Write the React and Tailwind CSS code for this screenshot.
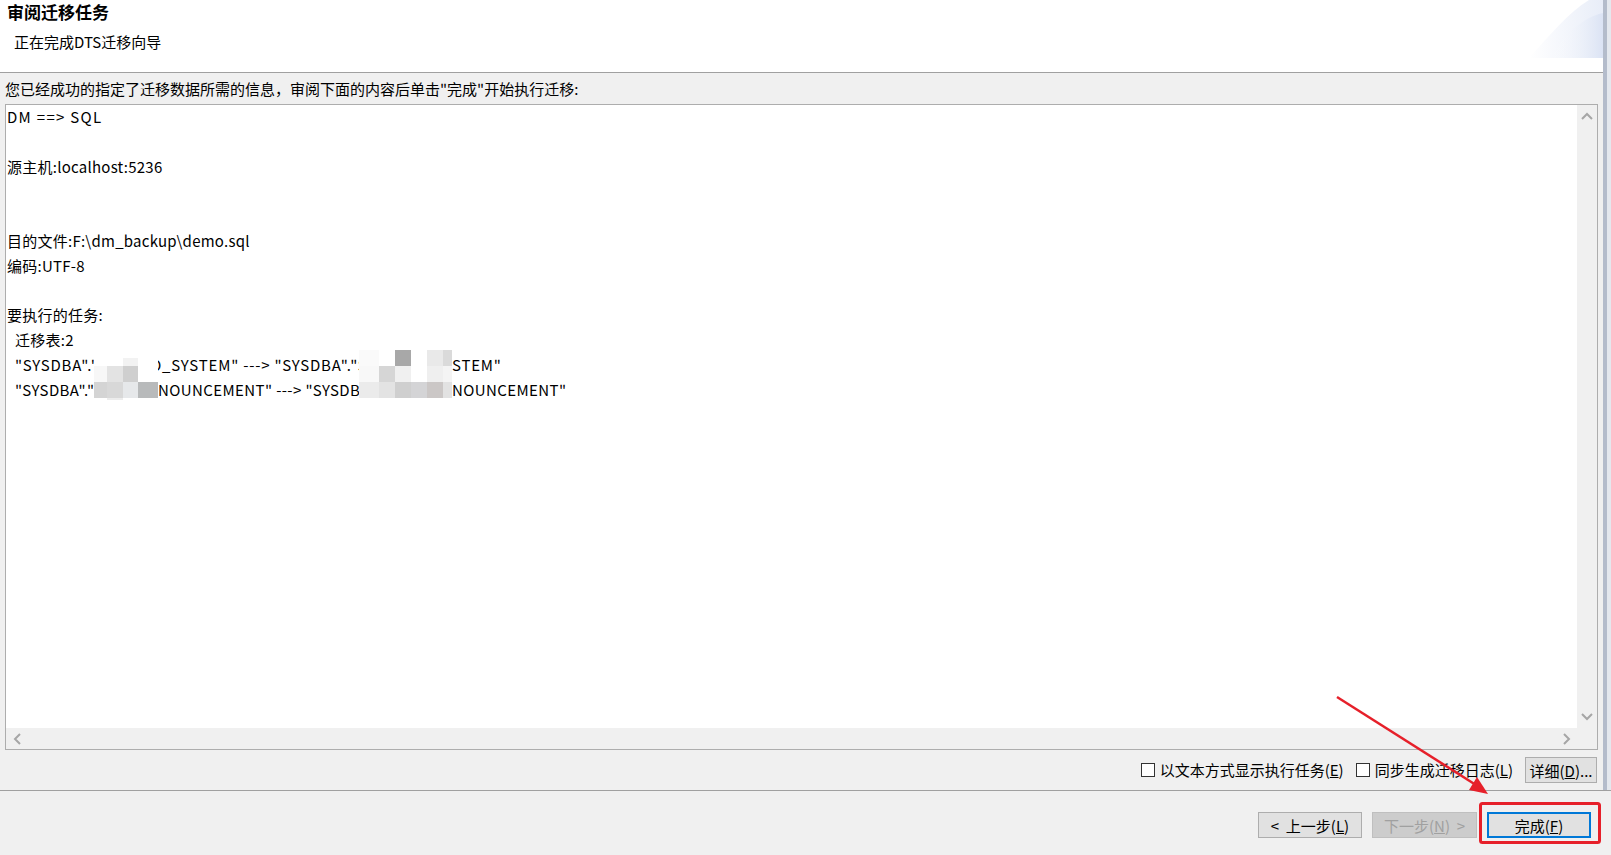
import React from 'react';

const font = "font-['Noto_Sans_CJK_SC','Microsoft_YaHei',sans-serif]";

const Chevron = ({ dir }) => {
    const d = {
        up: 'M1 7 L6 2 L11 7',
        down: 'M1 2 L6 7 L11 2',
        left: 'M7 1 L2 6 L7 11',
        right: 'M2 1 L7 6 L2 11',
    }[dir];
    const vertical = dir === 'up' || dir === 'down';
    return (
        <svg width={vertical ? 12 : 9} height={vertical ? 9 : 12} viewBox={vertical ? '0 0 12 9' : '0 0 9 12'}>
            <path d={d} fill="none" stroke="#a6a6a6" strokeWidth="2" />
        </svg>
    );
};

const Line = ({ children, className = '' }) => (
    <div className={`h-[24.8px] leading-[24.8px] whitespace-nowrap ${className}`}>{children}</div>
);

// mosaic over the redacted table names
const mosaic = [
    [94, 356, 13, 10, '#ffffff'], [107, 356, 16, 10, '#ffffff'], [123, 358, 15, 8, '#f2f2f2'], [138, 356, 20, 10, '#ffffff'],
    [94, 366, 13, 16, '#f7f7f7'], [107, 366, 16, 16, '#e3e3e3'], [123, 366, 15, 16, '#cfcfcf'], [138, 366, 20, 16, '#ffffff'],
    [94, 382, 13, 16, '#d4d4d4'], [107, 382, 16, 16, '#d8d8d8'], [123, 382, 15, 16, '#e6e8ea'], [138, 382, 20, 16, '#b8babb'],
    [107, 398, 16, 2, '#ececec'],
    [359, 350, 20, 16, '#fafafa'], [379, 350, 16, 16, '#ffffff'], [395, 350, 16, 16, '#a8a8a8'], [411, 350, 16, 16, '#ffffff'], [427, 350, 16, 16, '#e9e9e9'], [443, 350, 9, 16, '#dadada'],
    [359, 366, 20, 16, '#f8f8f8'], [379, 366, 16, 16, '#d6d6d6'], [395, 366, 16, 16, '#f0f0f0'], [411, 366, 16, 16, '#ffffff'], [427, 366, 16, 16, '#efefef'], [443, 366, 9, 16, '#f4f4f4'],
    [359, 382, 20, 16, '#ebebeb'], [379, 382, 16, 16, '#e3e3e3'], [395, 382, 16, 16, '#cfcfcf'], [411, 382, 16, 16, '#d4d4d6'], [427, 382, 16, 16, '#cbc7c6'], [443, 382, 9, 16, '#e2e2e2'],
];

const Checkbox = ({ label, hot }) => (
    <label className="flex items-center gap-[5px]">
        <span className="w-[14px] h-[14px] border border-[#333333] bg-white" />
        <span>{label}(<u>{hot}</u>)</span>
    </label>
);

export default function App() {
    return (
        <div className={`relative w-[1611px] h-[855px] bg-[#f0f0f0] text-black text-[15px] overflow-hidden flex flex-col ${font}`}>
            <div className="flex h-[790px]">
                <div className="w-[1603px] flex flex-col">
                    {/* header */}
                    <div className="relative h-[73px] bg-white border-b border-[#a0a0a0] pl-[7px] pt-[1px]">
                        <div className="text-[17px] font-bold leading-[22px]">审阅迁移任务</div>
                        <div className="mt-[9px] pl-[7px] leading-[20px]">正在完成DTS迁移向导</div>
                        <svg className="absolute right-0 top-0" width="80" height="58" viewBox="0 0 80 58">
                            <defs>
                                <linearGradient id="g1" x1="0" y1="0" x2="1" y2="0">
                                    <stop offset="0" stopColor="#ffffff" />
                                    <stop offset="1" stopColor="#e8edf8" />
                                </linearGradient>
                                <linearGradient id="g2" x1="0" y1="0" x2="1" y2="0">
                                    <stop offset="0" stopColor="#ffffff" stopOpacity="0" />
                                    <stop offset="1" stopColor="#dbe3f4" />
                                </linearGradient>
                            </defs>
                            <path d="M6 58 C 26 36, 46 12, 66 0 L80 0 L80 58 Z" fill="url(#g1)" />
                            <path d="M28 58 C 40 36, 58 18, 80 13 L80 58 Z" fill="url(#g2)" />
                        </svg>
                    </div>

                    <div className="h-[31px] pl-[5px] pt-[6px] leading-[20px]">
                        您已经成功的指定了迁移数据所需的信息，审阅下面的内容后单击"完成"开始执行迁移:
                    </div>

                    {/* summary text box */}
                    <div className="mx-[5px] h-[646px] border border-[#adadad] flex flex-col">
                        <div className="flex h-[623px]">
                            <div className="flex-1 bg-white pl-[1px] tracking-[0.25px]">
                                <Line className="tracking-[1.3px]">{'DM ==> SQL'}</Line>
                                <Line />
                                <Line>源主机:localhost:5236</Line>
                                <Line />
                                <Line />
                                <Line>目的文件:F:\dm_backup\demo.sql</Line>
                                <Line>编码:UTF-8</Line>
                                <Line />
                                <Line>要执行的任务:</Line>
                                <Line className="pl-2">迁移表:2</Line>
                                <Line className="pl-2 tracking-[0.8px]">
                                    <span className="inline-block w-[78px]">"SYSDBA"."</span>
                                    <span className="inline-block w-[58px]" />
                                    <span className="inline-block w-[208px]">{'D_SYSTEM" ---> "SYSDBA"."S'}</span>
                                    <span className="inline-block w-[93px]" />
                                    STEM"
                                </Line>
                                <Line className="pl-2 tracking-[0.4px]">
                                    <span className="inline-block w-[78px]">"SYSDBA"."</span>
                                    <span className="inline-block w-[65px]" />
                                    <span className="inline-block w-[201px]">{'NOUNCEMENT" ---> "SYSDBA"."SYS'}</span>
                                    <span className="inline-block w-[93px]" />
                                    NOUNCEMENT"
                                </Line>
                            </div>
                            <div className="w-[20px] flex flex-col justify-between items-center py-[7px]">
                                <Chevron dir="up" />
                                <Chevron dir="down" />
                            </div>
                        </div>
                        <div className="flex h-[21px]">
                            <div className="flex-1 flex items-center justify-between pl-[7px] pr-[6px]">
                                <Chevron dir="left" />
                                <Chevron dir="right" />
                            </div>
                            <div className="w-[20px]" />
                        </div>
                    </div>

                    <div className="mt-[7px] h-[26px] flex items-center justify-end pr-[6px]">
                        <Checkbox label="以文本方式显示执行任务" hot="E" />
                        <div className="ml-[12px]">
                            <Checkbox label="同步生成迁移日志" hot="L" />
                        </div>
                        <button className="ml-[12px] w-[72px] h-[26px] bg-[#e1e1e1] border border-[#adadad] leading-none">
                            详细(<u>D</u>)...
                        </button>
                    </div>
                </div>
                <div className="w-[4px] bg-[#b4bccb]" />
                <div className="w-[4px] bg-[#e4e8ee]" />
            </div>

            {/* wizard buttons */}
            <div className="flex-1 border-t border-[#a0a0a0] flex justify-end items-start gap-[10px] pt-[21px] pr-[20px]">
                <button className="w-[104px] h-[26px] bg-[#e1e1e1] border border-[#adadad] leading-none">
                    {'<\u00a0\u00a0上一步('}<u>L</u>)
                </button>
                <button className="w-[105px] h-[26px] bg-[#cccccc] border border-[#bfbfbf] text-[#a0a0a0] leading-none">
                    下一步(<u>N</u>){'\u00a0\u00a0>'}
                </button>
                <button className="w-[104px] h-[26px] bg-[#e1e1e1] border-2 border-[#0078d7] leading-none">
                    完成(<u>F</u>)
                </button>
            </div>

            {/* overlays: mosaic and red annotation */}
            <svg className="absolute inset-0 pointer-events-none" width="1611" height="855" viewBox="0 0 1611 855">
                {mosaic.map(([x, y, w, h, c], i) => (
                    <rect key={i} x={x} y={y} width={w} height={h} fill={c} />
                ))}
                <rect x="1480.5" y="803.5" width="119" height="39" rx="2" fill="none" stroke="#e6202a" strokeWidth="3" />
                <line x1="1337" y1="697" x2="1476" y2="785" stroke="#e6202a" strokeWidth="2.5" />
                <polygon points="1488,794 1469,790 1477,777" fill="#e6202a" />
            </svg>
        </div>
    );
}
